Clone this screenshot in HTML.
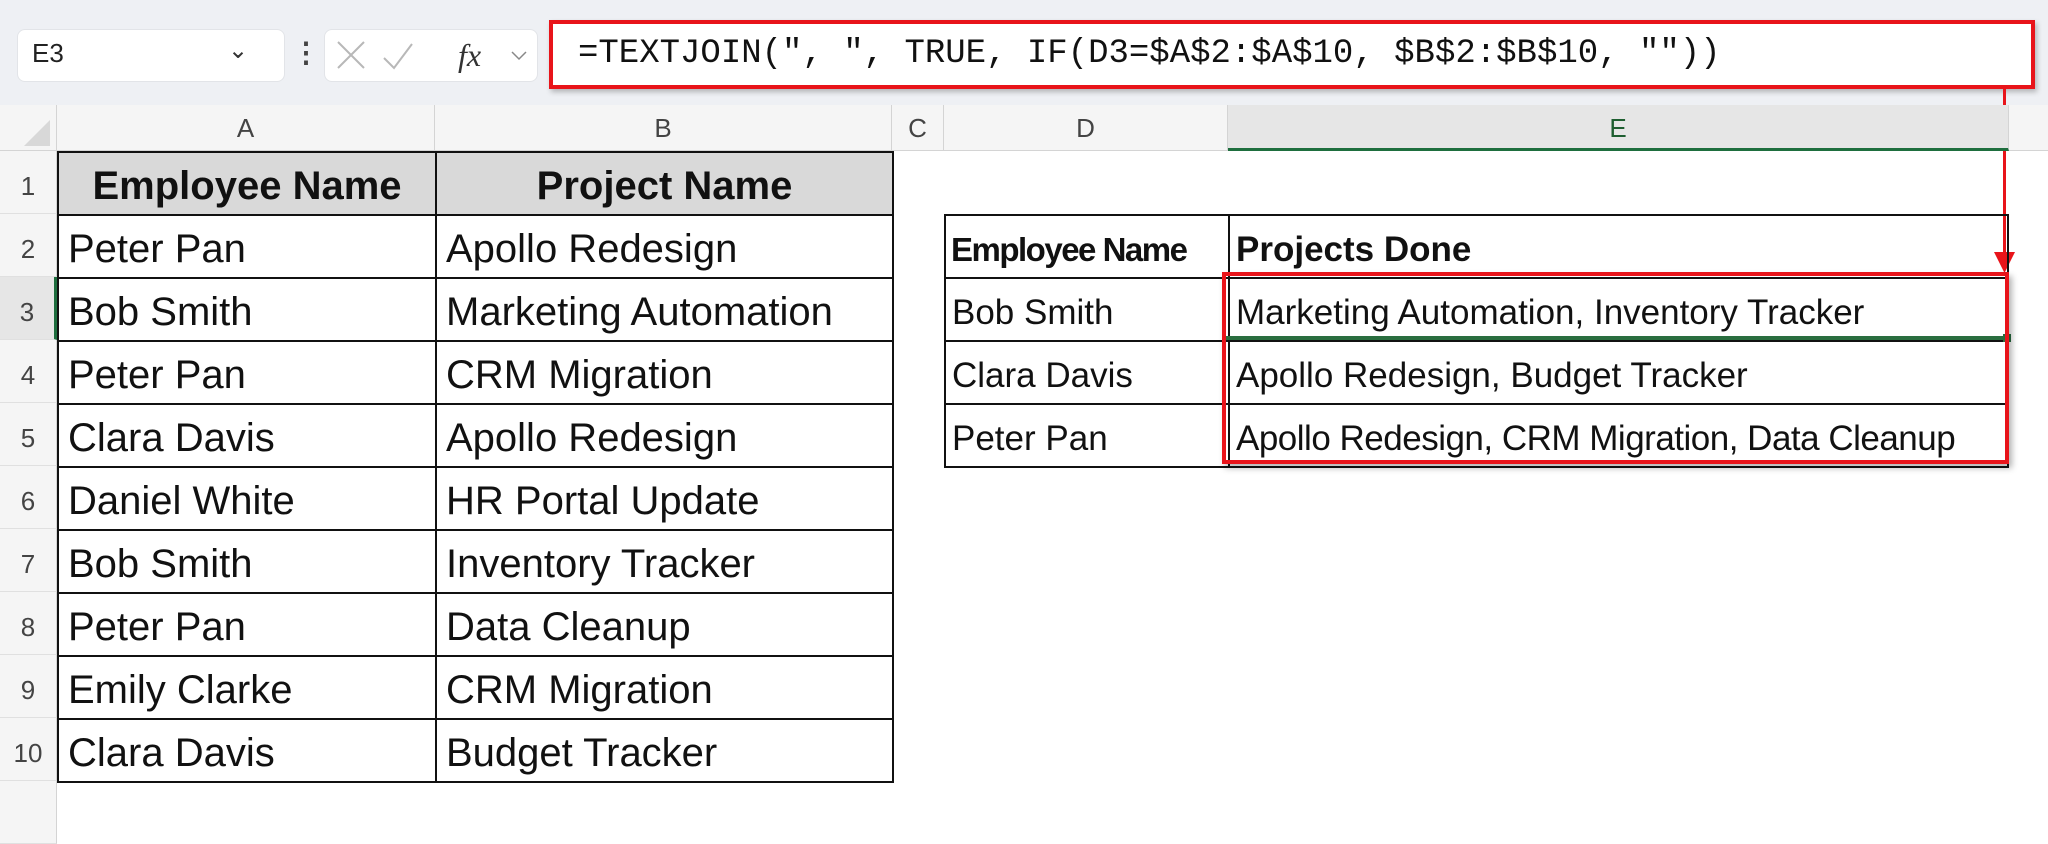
<!DOCTYPE html>
<html><head><meta charset="utf-8"><style>
*{margin:0;padding:0;box-sizing:border-box}
body{width:2048px;height:810px;overflow:hidden;background:#fff;font-family:"Liberation Sans",sans-serif;position:relative}
.a{position:absolute}
.top{left:0;top:0;width:2048px;height:105px;background:#eef0f4}
.box{background:#fff;border:1px solid #e2e4e8;border-radius:8px}
.ch{top:105px;height:46px;background:#f5f5f5;border-bottom:1px solid #d4d4d4;border-right:1px solid #d4d4d4;color:#444;font-size:26px;text-align:center;line-height:46px}
.rh{left:0;width:57px;height:63px;background:#f5f5f5;border-right:1px solid #d4d4d4;border-bottom:1px solid #e0e0e0;color:#444;font-size:26px;text-align:center;line-height:70px}
.c{border:2px solid #111;font-size:40px;line-height:66px;padding-left:9px;white-space:nowrap;color:#111;overflow:hidden}
.s{border:2px solid #111;font-size:35px;line-height:68px;padding-left:6px;white-space:nowrap;color:#111;overflow:hidden}
</style></head><body>
<div class="a top"></div>
<div class="a box" style="left:17px;top:29px;width:268px;height:53px"></div>
<div class="a" style="left:32px;top:38px;font-size:26px;color:#222">E3</div>
<div class="a" style="left:228px;top:36px;font-size:24px;color:#333">&#8964;</div>
<div class="a" style="left:292px;top:36px;font-size:28px;color:#444;font-weight:bold">&#8942;</div>
<div class="a box" style="left:324px;top:29px;width:214px;height:53px"></div>
<svg class="a" style="left:334px;top:36px" width="200" height="40"><path d="M4 6 L30 32 M30 6 L4 32" stroke="#b8b8b8" stroke-width="2" fill="none"/><path d="M50 22 L60 32 L78 8" stroke="#b8b8b8" stroke-width="2" fill="none"/><text x="124" y="30" font-family="Liberation Serif" font-style="italic" font-size="32" fill="#333">fx</text><path d="M178 16 L185 23 L192 16" stroke="#888" stroke-width="1.5" fill="none"/></svg>
<div class="a" style="left:549px;top:20px;width:1486px;height:69px;border:4px solid #e8141a;background:#fff;box-shadow:2px 3px 5px rgba(0,0,0,.25)"></div>
<div class="a" style="left:578px;top:35px;font-family:'Liberation Mono',monospace;font-size:34px;color:#111">=TEXTJOIN(", ", TRUE, IF(D3=$A$2:$A$10, $B$2:$B$10, ""))</div>
<div class="a" style="left:2003px;top:89px;width:3px;height:168px;background:#e8141a"></div>
<svg class="a" style="left:1994px;top:252px" width="22" height="22"><path d="M0 0 L21 0 L10.5 21 Z" fill="#e8141a"/></svg>
<div class="a" style="left:0;top:105px;width:57px;height:46px;background:#f5f5f5;border-right:1px solid #d4d4d4;border-bottom:1px solid #d4d4d4"></div>
<svg class="a" style="left:22px;top:118px" width="30" height="30"><path d="M28 2 L28 28 L2 28 Z" fill="#d8d8d8"/></svg>
<div class="a ch" style="left:57px;width:378px">A</div>
<div class="a ch" style="left:435px;width:457px">B</div>
<div class="a ch" style="left:892px;width:52px">C</div>
<div class="a ch" style="left:944px;width:284px">D</div>
<div class="a ch" style="left:1228px;width:781px;background:#e6e6e6;border-bottom:3px solid #1e6e3e;color:#1e5e30">E</div>
<div class="a ch" style="left:2009px;width:39px;border-right:none"></div>
<div class="a rh" style="top:151px">1</div>
<div class="a rh" style="top:214px">2</div>
<div class="a rh" style="top:277px;background:#e6e6e6;border-right:3px solid #1e6e3e">3</div>
<div class="a rh" style="top:340px">4</div>
<div class="a rh" style="top:403px">5</div>
<div class="a rh" style="top:466px">6</div>
<div class="a rh" style="top:529px">7</div>
<div class="a rh" style="top:592px">8</div>
<div class="a rh" style="top:655px">9</div>
<div class="a rh" style="top:718px">10</div>
<div class="a rh" style="top:781px"></div>
<div class="a c" style="left:57px;top:151px;width:380px;height:65px;background:#d9d9d9;font-weight:bold;text-align:center;padding:0">Employee Name</div>
<div class="a c" style="left:435px;top:151px;width:459px;height:65px;background:#d9d9d9;font-weight:bold;text-align:center;padding:0">Project Name</div>
<div class="a c" style="left:57px;top:214px;width:380px;height:65px">Peter Pan</div><div class="a c" style="left:435px;top:214px;width:459px;height:65px">Apollo Redesign</div>
<div class="a c" style="left:57px;top:277px;width:380px;height:65px">Bob Smith</div><div class="a c" style="left:435px;top:277px;width:459px;height:65px">Marketing Automation</div>
<div class="a c" style="left:57px;top:340px;width:380px;height:65px">Peter Pan</div><div class="a c" style="left:435px;top:340px;width:459px;height:65px">CRM Migration</div>
<div class="a c" style="left:57px;top:403px;width:380px;height:65px">Clara Davis</div><div class="a c" style="left:435px;top:403px;width:459px;height:65px">Apollo Redesign</div>
<div class="a c" style="left:57px;top:466px;width:380px;height:65px">Daniel White</div><div class="a c" style="left:435px;top:466px;width:459px;height:65px">HR Portal Update</div>
<div class="a c" style="left:57px;top:529px;width:380px;height:65px">Bob Smith</div><div class="a c" style="left:435px;top:529px;width:459px;height:65px">Inventory Tracker</div>
<div class="a c" style="left:57px;top:592px;width:380px;height:65px">Peter Pan</div><div class="a c" style="left:435px;top:592px;width:459px;height:65px">Data Cleanup</div>
<div class="a c" style="left:57px;top:655px;width:380px;height:65px">Emily Clarke</div><div class="a c" style="left:435px;top:655px;width:459px;height:65px">CRM Migration</div>
<div class="a c" style="left:57px;top:718px;width:380px;height:65px">Clara Davis</div><div class="a c" style="left:435px;top:718px;width:459px;height:65px">Budget Tracker</div>
<div class="a s" style="left:944px;top:214px;width:286px;height:65px;font-weight:bold;letter-spacing:-1.5px;font-size:33px;padding-left:5px">Employee Name</div><div class="a s" style="left:1228px;top:214px;width:781px;height:65px;font-weight:bold">Projects Done</div>
<div class="a s" style="left:944px;top:277px;width:286px;height:65px">Bob Smith</div><div class="a s" style="left:1228px;top:277px;width:781px;height:65px">Marketing Automation, Inventory Tracker</div>
<div class="a s" style="left:944px;top:340px;width:286px;height:65px">Clara Davis</div><div class="a s" style="left:1228px;top:340px;width:781px;height:65px">Apollo Redesign, Budget Tracker</div>
<div class="a s" style="left:944px;top:403px;width:286px;height:65px">Peter Pan</div><div class="a s" style="left:1228px;top:403px;width:781px;height:65px;letter-spacing:-0.5px">Apollo Redesign, CRM Migration, Data Cleanup</div>
<div class="a" style="left:1226px;top:336px;width:780px;height:4px;background:#2a6e3f"></div>
<div class="a" style="left:2003px;top:334px;width:8px;height:8px;background:#2a6e3f"></div>
<div class="a" style="left:1222px;top:272px;width:787px;height:192px;border:4px solid #e8141a;box-shadow:3px 4px 6px rgba(0,0,0,.3)"></div>
</body></html>
